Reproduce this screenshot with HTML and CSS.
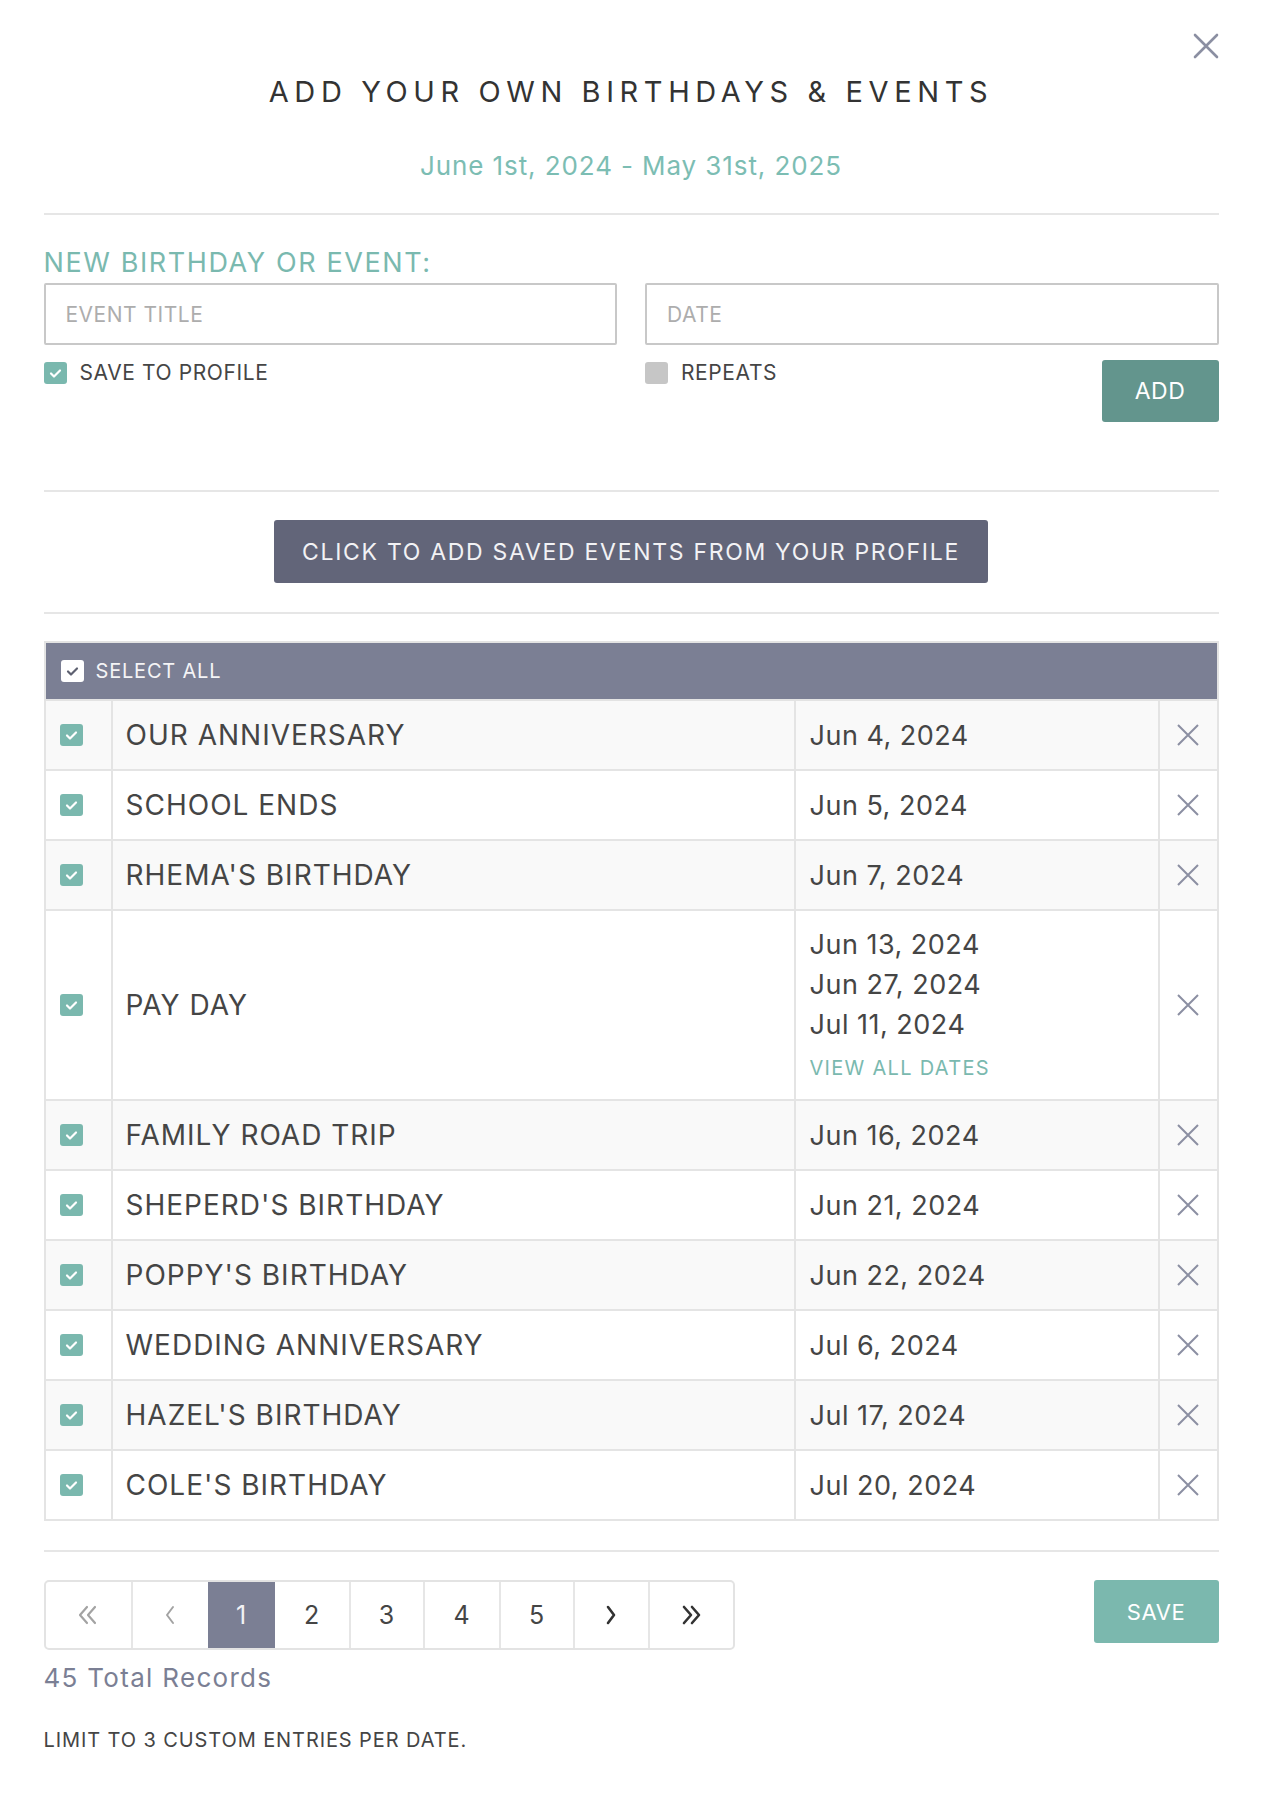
FILE: index.html
```html
<!DOCTYPE html>
<html lang="en">
<head>
<meta charset="utf-8">
<title>Add your own birthdays &amp; events</title>
<link rel="stylesheet" href="styles.css">
</head>
<body>
<div class="modal">
  <button class="close" aria-label="Close">
    <svg width="26" height="26" viewBox="0 0 26 26"><path d="M2 2 L24 24 M24 2 L2 24" stroke="#8b8fa2" stroke-width="2.6" fill="none" stroke-linecap="round"/></svg>
  </button>

  <h1 class="title">ADD YOUR OWN BIRTHDAYS &amp; EVENTS</h1>
  <p class="range">June 1st, 2024 - May 31st, 2025</p>
  <hr class="rule rule-top">

  <section class="new-event">
    <h2 class="section-label">NEW BIRTHDAY OR EVENT:</h2>
    <div class="form-grid">
      <div class="form-col">
        <input class="field" type="text" placeholder="EVENT TITLE">
        <div class="opt-row">
          <label class="check">
            <span class="box box-on"><svg width="23" height="22" viewBox="0 0 23 22"><path d="M7 11.5 L10 14.5 L16 8.5" stroke="#fff" stroke-width="2.2" fill="none" stroke-linecap="round" stroke-linejoin="round"/></svg></span>
            SAVE TO PROFILE
          </label>
        </div>
      </div>
      <div class="form-col">
        <input class="field" type="text" placeholder="DATE">
        <div class="opt-row">
          <label class="check">
            <span class="box box-off"></span>
            REPEATS
          </label>
          <button class="btn btn-add">ADD</button>
        </div>
      </div>
    </div>
  </section>

  <hr class="rule rule-form">

  <div class="saved-wrap">
    <button class="btn btn-saved">CLICK TO ADD SAVED EVENTS FROM YOUR PROFILE</button>
  </div>

  <hr class="rule rule-saved">

  <table class="events">
    <thead>
      <tr>
        <th colspan="4">
          <span class="head-check">
            <span class="box box-white"><svg width="23" height="22" viewBox="0 0 23 22"><path d="M7 11.5 L10 14.5 L16 8.5" stroke="#5d6070" stroke-width="2.2" fill="none" stroke-linecap="round" stroke-linejoin="round"/></svg></span>
            SELECT ALL
          </span>
        </th>
      </tr>
    </thead>
    <tbody>
      <tr class="alt">
        <td class="c-check"><span class="box box-on"><svg width="23" height="22" viewBox="0 0 23 22"><path d="M7 11.5 L10 14.5 L16 8.5" stroke="#fff" stroke-width="2.2" fill="none" stroke-linecap="round" stroke-linejoin="round"/></svg></span></td>
        <td class="c-name">OUR ANNIVERSARY</td>
        <td class="c-date">Jun 4, 2024</td>
        <td class="c-del"><svg width="24" height="24" viewBox="0 0 24 24"><path d="M2 2 L22 22 M22 2 L2 22" stroke="#8b8fa2" stroke-width="2" fill="none"/></svg></td>
      </tr>
      <tr>
        <td class="c-check"><span class="box box-on"><svg width="23" height="22" viewBox="0 0 23 22"><path d="M7 11.5 L10 14.5 L16 8.5" stroke="#fff" stroke-width="2.2" fill="none" stroke-linecap="round" stroke-linejoin="round"/></svg></span></td>
        <td class="c-name">SCHOOL ENDS</td>
        <td class="c-date">Jun 5, 2024</td>
        <td class="c-del"><svg width="24" height="24" viewBox="0 0 24 24"><path d="M2 2 L22 22 M22 2 L2 22" stroke="#8b8fa2" stroke-width="2" fill="none"/></svg></td>
      </tr>
      <tr class="alt">
        <td class="c-check"><span class="box box-on"><svg width="23" height="22" viewBox="0 0 23 22"><path d="M7 11.5 L10 14.5 L16 8.5" stroke="#fff" stroke-width="2.2" fill="none" stroke-linecap="round" stroke-linejoin="round"/></svg></span></td>
        <td class="c-name">RHEMA'S BIRTHDAY</td>
        <td class="c-date">Jun 7, 2024</td>
        <td class="c-del"><svg width="24" height="24" viewBox="0 0 24 24"><path d="M2 2 L22 22 M22 2 L2 22" stroke="#8b8fa2" stroke-width="2" fill="none"/></svg></td>
      </tr>
      <tr>
        <td class="c-check"><span class="box box-on"><svg width="23" height="22" viewBox="0 0 23 22"><path d="M7 11.5 L10 14.5 L16 8.5" stroke="#fff" stroke-width="2.2" fill="none" stroke-linecap="round" stroke-linejoin="round"/></svg></span></td>
        <td class="c-name">PAY DAY</td>
        <td class="c-date c-multi">
          <div class="d-line">Jun 13, 2024</div>
          <div class="d-line">Jun 27, 2024</div>
          <div class="d-line">Jul 11, 2024</div>
          <a class="view-all" href="#">VIEW ALL DATES</a>
        </td>
        <td class="c-del"><svg width="24" height="24" viewBox="0 0 24 24"><path d="M2 2 L22 22 M22 2 L2 22" stroke="#8b8fa2" stroke-width="2" fill="none"/></svg></td>
      </tr>
      <tr class="alt">
        <td class="c-check"><span class="box box-on"><svg width="23" height="22" viewBox="0 0 23 22"><path d="M7 11.5 L10 14.5 L16 8.5" stroke="#fff" stroke-width="2.2" fill="none" stroke-linecap="round" stroke-linejoin="round"/></svg></span></td>
        <td class="c-name">FAMILY ROAD TRIP</td>
        <td class="c-date">Jun 16, 2024</td>
        <td class="c-del"><svg width="24" height="24" viewBox="0 0 24 24"><path d="M2 2 L22 22 M22 2 L2 22" stroke="#8b8fa2" stroke-width="2" fill="none"/></svg></td>
      </tr>
      <tr>
        <td class="c-check"><span class="box box-on"><svg width="23" height="22" viewBox="0 0 23 22"><path d="M7 11.5 L10 14.5 L16 8.5" stroke="#fff" stroke-width="2.2" fill="none" stroke-linecap="round" stroke-linejoin="round"/></svg></span></td>
        <td class="c-name">SHEPERD'S BIRTHDAY</td>
        <td class="c-date">Jun 21, 2024</td>
        <td class="c-del"><svg width="24" height="24" viewBox="0 0 24 24"><path d="M2 2 L22 22 M22 2 L2 22" stroke="#8b8fa2" stroke-width="2" fill="none"/></svg></td>
      </tr>
      <tr class="alt">
        <td class="c-check"><span class="box box-on"><svg width="23" height="22" viewBox="0 0 23 22"><path d="M7 11.5 L10 14.5 L16 8.5" stroke="#fff" stroke-width="2.2" fill="none" stroke-linecap="round" stroke-linejoin="round"/></svg></span></td>
        <td class="c-name">POPPY'S BIRTHDAY</td>
        <td class="c-date">Jun 22, 2024</td>
        <td class="c-del"><svg width="24" height="24" viewBox="0 0 24 24"><path d="M2 2 L22 22 M22 2 L2 22" stroke="#8b8fa2" stroke-width="2" fill="none"/></svg></td>
      </tr>
      <tr>
        <td class="c-check"><span class="box box-on"><svg width="23" height="22" viewBox="0 0 23 22"><path d="M7 11.5 L10 14.5 L16 8.5" stroke="#fff" stroke-width="2.2" fill="none" stroke-linecap="round" stroke-linejoin="round"/></svg></span></td>
        <td class="c-name">WEDDING ANNIVERSARY</td>
        <td class="c-date">Jul 6, 2024</td>
        <td class="c-del"><svg width="24" height="24" viewBox="0 0 24 24"><path d="M2 2 L22 22 M22 2 L2 22" stroke="#8b8fa2" stroke-width="2" fill="none"/></svg></td>
      </tr>
      <tr class="alt">
        <td class="c-check"><span class="box box-on"><svg width="23" height="22" viewBox="0 0 23 22"><path d="M7 11.5 L10 14.5 L16 8.5" stroke="#fff" stroke-width="2.2" fill="none" stroke-linecap="round" stroke-linejoin="round"/></svg></span></td>
        <td class="c-name">HAZEL'S BIRTHDAY</td>
        <td class="c-date">Jul 17, 2024</td>
        <td class="c-del"><svg width="24" height="24" viewBox="0 0 24 24"><path d="M2 2 L22 22 M22 2 L2 22" stroke="#8b8fa2" stroke-width="2" fill="none"/></svg></td>
      </tr>
      <tr>
        <td class="c-check"><span class="box box-on"><svg width="23" height="22" viewBox="0 0 23 22"><path d="M7 11.5 L10 14.5 L16 8.5" stroke="#fff" stroke-width="2.2" fill="none" stroke-linecap="round" stroke-linejoin="round"/></svg></span></td>
        <td class="c-name">COLE'S BIRTHDAY</td>
        <td class="c-date">Jul 20, 2024</td>
        <td class="c-del"><svg width="24" height="24" viewBox="0 0 24 24"><path d="M2 2 L22 22 M22 2 L2 22" stroke="#8b8fa2" stroke-width="2" fill="none"/></svg></td>
      </tr>
    </tbody>
  </table>

  <hr class="rule rule-table">

  <div class="footer-row">
    <ul class="pager">
      <li class="pg pg-edge pg-disabled"><svg width="22" height="20" viewBox="0 0 22 20"><path d="M10 2 L3 10 L10 18 M18 2 L11 10 L18 18" stroke="#a3a3a3" stroke-width="2.2" fill="none" stroke-linecap="round" stroke-linejoin="round"/></svg></li>
      <li class="pg pg-step pg-disabled"><svg width="12" height="20" viewBox="0 0 12 20"><path d="M9 2 L3 10 L9 18" stroke="#a3a3a3" stroke-width="2" fill="none" stroke-linecap="round" stroke-linejoin="round"/></svg></li>
      <li class="pg pg-active">1</li>
      <li class="pg pg-num">2</li>
      <li class="pg pg-num">3</li>
      <li class="pg pg-num pg-wide">4</li>
      <li class="pg pg-num">5</li>
      <li class="pg pg-step2"><svg width="12" height="20" viewBox="0 0 12 20"><path d="M3 2 L9 10 L3 18" stroke="#333" stroke-width="2.6" fill="none" stroke-linecap="round" stroke-linejoin="round"/></svg></li>
      <li class="pg pg-edge pg-last"><svg width="22" height="20" viewBox="0 0 22 20"><path d="M4 2 L11 10 L4 18 M12 2 L19 10 L12 18" stroke="#333" stroke-width="2.6" fill="none" stroke-linecap="round" stroke-linejoin="round"/></svg></li>
    </ul>
    <button class="btn btn-save">SAVE</button>
  </div>

  <p class="total">45 Total Records</p>
  <p class="limit">LIMIT TO 3 CUSTOM ENTRIES PER DATE.</p>
</div>
</body>
</html>
```

FILE: styles.css
```css
* { box-sizing: border-box; }

html, body {
  margin: 0;
  padding: 0;
  background: #ffffff;
}

body {
  font-family: Inter, "Liberation Sans", sans-serif;
  color: #454545;
}

.modal {
  position: relative;
  width: 1175px;
  margin: 0 auto;
  padding-top: 74px;
  padding-bottom: 40px;
}

.close {
  position: absolute;
  top: 33px;
  right: 0;
  width: 26px;
  height: 26px;
  padding: 0;
  border: 0;
  background: transparent;
  display: flex;
}

.title {
  margin: 0;
  font-size: 29px;
  line-height: 36px;
  font-weight: 400;
  letter-spacing: 5.6px;
  text-align: center;
  color: #333;
}

.range {
  margin: 40px 0 0;
  font-size: 26px;
  line-height: 32px;
  letter-spacing: 0.9px;
  text-align: center;
  color: #7cbdb3;
}

.rule {
  border: 0;
  height: 2px;
  background: #e6e6e6;
  margin: 0;
}

.rule-top { margin-top: 31px; }
.rule-form { margin-top: 68px; }
.rule-saved { margin-top: 29px; }
.rule-table { margin-top: 29px; }

.section-label {
  margin: 31px 0 3px;
  font-size: 27px;
  line-height: 34px;
  font-weight: 400;
  letter-spacing: 1.6px;
  color: #7ab9af;
}

.form-grid {
  display: grid;
  grid-template-columns: 1fr 1fr;
  column-gap: 28px;
}

.field {
  display: block;
  width: 100%;
  height: 62px;
  border: 2px solid #c8c8c8;
  border-radius: 2px;
  padding: 0 20px;
  font-family: inherit;
  font-size: 21px;
  letter-spacing: 0.5px;
  color: #454545;
  background: #fff;
}

.field::placeholder {
  color: #adadad;
}

.opt-row {
  display: flex;
  justify-content: space-between;
  align-items: flex-start;
  margin-top: 15px;
}

.check {
  display: flex;
  align-items: center;
  gap: 13px;
  margin-top: 2px;
  font-size: 21px;
  line-height: 22px;
  letter-spacing: 0.6px;
  color: #454545;
}

.box {
  display: inline-flex;
  width: 23px;
  height: 22px;
  border-radius: 3px;
  flex: none;
}

.box-on { background: #7ab8ae; }
.box-off { background: #c6c6c6; }
.box-white { background: #ffffff; }

.btn {
  border: 0;
  border-radius: 3px;
  font-family: inherit;
  font-weight: 400;
  color: #fff;
  cursor: pointer;
}

.btn-add {
  width: 117px;
  height: 62px;
  background: #63958d;
  font-size: 23px;
  letter-spacing: 0.5px;
}

.saved-wrap {
  display: flex;
  justify-content: center;
  margin-top: 28px;
}

.btn-saved {
  width: 714px;
  height: 63px;
  background: #626579;
  font-size: 23px;
  letter-spacing: 1.7px;
  color: #f2f2f5;
}

.events {
  width: 100%;
  margin-top: 27px;
  border-collapse: collapse;
  border: 2px solid #e3e3e3;
}

.events th {
  height: 58px;
  padding: 0 0 0 15px;
  background: #7b7f94;
  text-align: left;
  font-weight: 400;
  border: 2px solid #e3e3e3;
}

.head-check {
  display: flex;
  align-items: center;
  gap: 12px;
  font-size: 20px;
  letter-spacing: 0.8px;
  color: #f4f4f6;
}

.events td {
  height: 70px;
  border: 2px solid #e4e4e4;
  vertical-align: middle;
}

.events tr.alt td { background: #f9f9f9; }

.c-check {
  width: 67px;
  padding: 0 0 0 14px;
}

.c-check .box { display: flex; }

.c-name {
  padding: 0 0 0 13px;
  font-size: 28px;
  letter-spacing: 1px;
  color: #454545;
}

.c-date {
  width: 364px;
  padding: 0 0 0 14px;
  font-size: 27px;
  letter-spacing: 0.5px;
  color: #454545;
}

.c-multi {
  padding-top: 14px;
  padding-bottom: 16px;
}

.d-line {
  line-height: 40px;
}

.view-all {
  display: block;
  margin-top: 8px;
  line-height: 30px;
  font-size: 20px;
  letter-spacing: 1.3px;
  color: #7ab9af;
  text-decoration: none;
}

.c-del {
  width: 59px;
  text-align: center;
  padding: 0;
}

.c-del svg { display: block; margin: 0 auto; }

.footer-row {
  display: flex;
  justify-content: space-between;
  align-items: flex-start;
  margin-top: 28px;
}

.pager {
  display: flex;
  margin: 0;
  padding: 0;
  list-style: none;
  border: 2px solid #e3e3e3;
  border-radius: 5px;
  overflow: hidden;
  height: 70px;
}

.pg {
  display: flex;
  align-items: center;
  justify-content: center;
  height: 66px;
  border-left: 2px solid #e6e6e6;
  font-size: 25px;
  color: #454545;
}

.pg:first-child { border-left: 0; }

.pg-edge { width: 85px; }
.pg-step { width: 77px; }
.pg-step2 { width: 75px; }
.pg-num { width: 74px; }
.pg-wide { width: 76px; }
.pg-last { width: 85px; }

.pg-active {
  width: 67px;
  background: #7b7f94;
  color: #f2f2f5;
  border-left: 0;
}

.pg-active + .pg { border-left: 0; }

.btn-save {
  width: 125px;
  height: 63px;
  background: #7bb8ae;
  font-size: 22px;
  letter-spacing: 0.6px;
}

.total {
  margin: 11px 0 0;
  font-size: 26px;
  line-height: 34px;
  letter-spacing: 1.3px;
  color: #7b7f94;
}

.limit {
  margin: 32px 0 0;
  font-size: 20px;
  line-height: 26px;
  letter-spacing: 0.9px;
  color: #454545;
}
```
